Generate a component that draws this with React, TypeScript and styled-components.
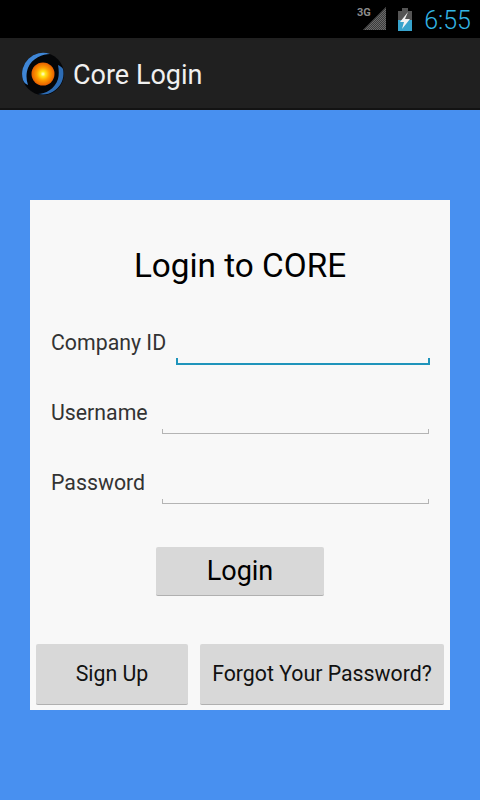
import React from "react";
import styled, { createGlobalStyle } from "styled-components";

const Global = createGlobalStyle`
  html, body { margin: 0; padding: 0; background: #4890f0; }
  * { box-sizing: border-box; }
`;

const Screen = styled.div`
  width: 480px;
  height: 800px;
  display: flex;
  flex-direction: column;
  background: #4890f0;
  font-family: Roboto, "Liberation Sans", sans-serif;
  overflow: hidden;
`;

const StatusBar = styled.div`
  height: 38px;
  background: #000;
  display: flex;
  align-items: flex-start;
  justify-content: flex-end;
  padding: 4px 9px 0 0;
`;

const StatusIcons = styled.svg`
  width: 64px;
  height: 30px;
  display: block;
  flex: none;
`;

const StatusLabel = styled.text`
  font-family: Roboto, sans-serif;
  font-size: 11px;
  font-weight: 700;
  fill: #8c8c8c;
`;

const Clock = styled.span`
  color: #33b5e5;
  font-size: 25px;
  font-weight: 300;
  line-height: 34px;
  margin-left: 6px;
  height: 34px;
`;

const ActionBar = styled.div`
  height: 72px;
  background: #202020;
  border-bottom: 2px solid #131313;
  display: flex;
  align-items: center;
  padding: 2px 0 0 21px;
  gap: 8px;
`;

const AppTitle = styled.h1`
  margin: 0;
  padding-top: 2px;
  color: #f0f0f0;
  font-size: 27px;
  font-weight: 400;
`;

const Content = styled.main`
  flex: 1;
  padding: 90px 30px 0;
`;

const Card = styled.section`
  width: 420px;
  height: 510px;
  background: #f8f8f8;
  display: flex;
  flex-direction: column;
`;

const Heading = styled.h2`
  margin: 0;
  padding-top: 46px;
  height: 129px;
  color: #000;
  text-align: center;
  font-size: 33.3px;
  line-height: 40px;
  font-weight: 400;
`;

const Fields = styled.div`
  display: flex;
  flex-direction: column;
  gap: 20px;
  padding: 0 21px;
`;

const Row = styled.label`
  height: 50px;
  display: flex;
  align-items: flex-start;
`;

const Label = styled.span`
  color: #333;
  font-size: 21.3px;
  line-height: 28px;
  white-space: nowrap;
`;

const Input = styled.span<{ $focused?: boolean }>`
  display: block;
  height: ${(p) => (p.$focused ? 7 : 5)}px;
  margin-top: ${(p) => (p.$focused ? 29 : 30)}px;
  margin-left: auto;
  width: ${(p) => (p.$focused ? 254 : 267)}px;
  margin-right: ${(p) => (p.$focused ? -1 : 0)}px;
  border: ${(p) => (p.$focused ? 2 : 1)}px solid ${(p) => (p.$focused ? "#1f94bb" : "#b4b4b4")};
  border-top: 0;
  flex: none;
`;

const LoginSlot = styled.div`
  display: flex;
  justify-content: center;
  margin-top: 28px;
`;

const LoginButton = styled.button`
  width: 168px;
  height: 49px;
  padding: 0;
  border: 0;
  border-bottom: 1px solid #b0b0b0;
  border-radius: 2px;
  background: #d8d8d8;
  color: #000;
  font-family: inherit;
  font-size: 27px;
`;

const BottomRow = styled.div`
  display: flex;
  gap: 12px;
  padding: 0 6px;
  margin-top: 48px;
`;

const BottomButton = styled.button<{ $width: number }>`
  width: ${(p) => p.$width}px;
  height: 61px;
  padding: 0 0 2px;
  border: 0;
  border-bottom: 1px solid #b0b0b0;
  border-radius: 2px;
  background: #d8d8d8;
  color: #111;
  font-family: inherit;
  font-size: 21.3px;
  white-space: nowrap;
`;

const StatusGlyphs = () => (
  <StatusIcons viewBox="0 0 64 30">
    <defs>
      <pattern id="dither" width="2" height="2" patternUnits="userSpaceOnUse">
        <rect width="2" height="2" fill="#3a3a3a" />
        <rect width="1" height="1" fill="#6a6a6a" />
        <rect x="1" y="1" width="1" height="1" fill="#6a6a6a" />
      </pattern>
    </defs>
    <StatusLabel x="3" y="12">3G</StatusLabel>
    <polygon points="9,26 32,3 32,26" fill="url(#dither)" />
    <rect x="48" y="4" width="6" height="3" fill="#555" />
    <rect x="44" y="7" width="14" height="9" fill="#555" />
    <rect x="44" y="16" width="14" height="11" fill="#37a3cc" />
    <polygon points="54,8 46,18 50,18 48,25 56,15 51,15" fill="#f2f2f2" />
  </StatusIcons>
);

const Logo = () => (
  <svg width="44" height="44" viewBox="0 0 44 44">
    <defs>
      <radialGradient id="sun">
        <stop offset="0" stopColor="#fffde0" />
        <stop offset="0.22" stopColor="#ffe81a" />
        <stop offset="0.55" stopColor="#ff9e00" />
        <stop offset="1" stopColor="#e85f00" />
      </radialGradient>
    </defs>
    <circle cx="22" cy="22" r="21" fill="#050608" />
    <path d="M2 28 A21 21 0 0 1 29 2 C22 2 11 6 7 16 C5 21 5 27 7 33 C4 32 3 30 2 28 Z" fill="#3f86d6" />
    <path d="M42 17 A21 21 0 0 1 17 42 C24 42 34 37 37 27 C38 23 38 18 37 13 C39 14 41 15 42 17 Z" fill="#2d6cb4" />
    <circle cx="22" cy="22" r="11.5" fill="url(#sun)" />
  </svg>
);

const fields = [
  { label: "Company ID", focused: true },
  { label: "Username", focused: false },
  { label: "Password", focused: false },
];

export default function App() {
  return (
    <Screen>
      <Global />
      <StatusBar>
        <StatusGlyphs />
        <Clock>6:55</Clock>
      </StatusBar>
      <ActionBar>
        <Logo />
        <AppTitle>Core Login</AppTitle>
      </ActionBar>
      <Content>
        <Card>
          <Heading>Login to CORE</Heading>
          <Fields>
            {fields.map((f) => (
              <Row key={f.label}>
                <Label>{f.label}</Label>
                <Input $focused={f.focused} />
              </Row>
            ))}
          </Fields>
          <LoginSlot>
            <LoginButton>Login</LoginButton>
          </LoginSlot>
          <BottomRow>
            <BottomButton $width={152}>Sign Up</BottomButton>
            <BottomButton $width={244}>Forgot Your Password?</BottomButton>
          </BottomRow>
        </Card>
      </Content>
    </Screen>
  );
}
